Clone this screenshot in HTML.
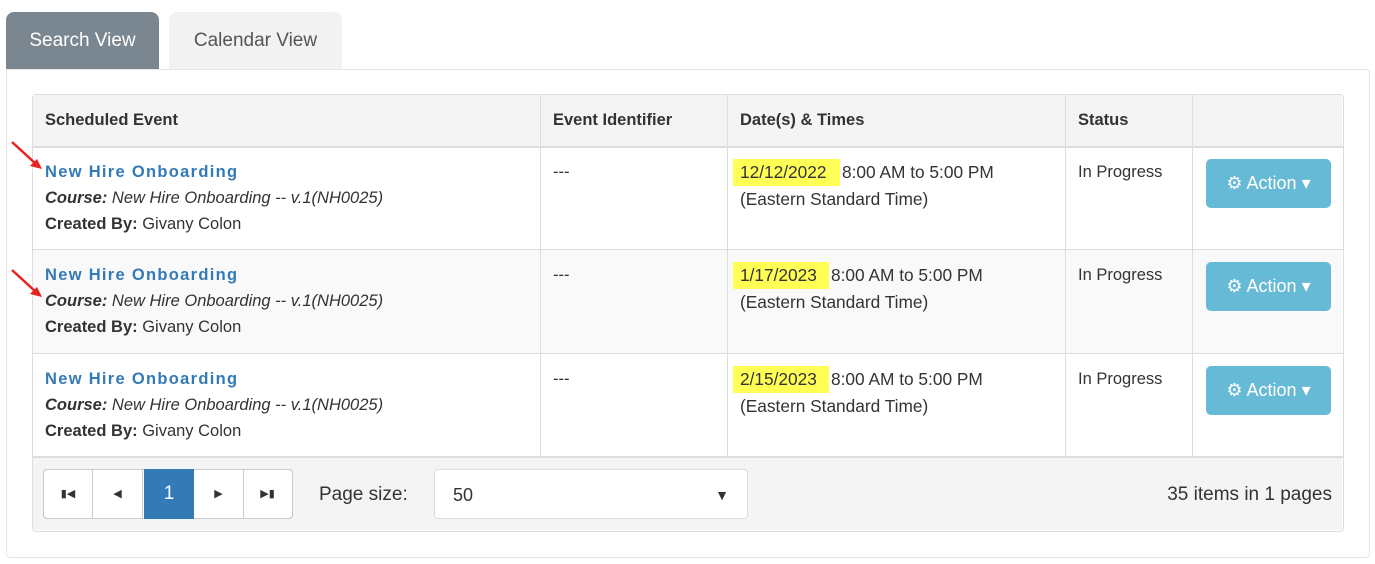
<html><head><style>
body{margin:0;width:1375px;height:564px;background:#fff;font-family:"Liberation Sans",sans-serif;color:#333;position:relative;overflow:hidden}
.a{position:absolute}
.tab{position:absolute;top:12px;height:57px;border-radius:8px 8px 0 0;font-size:19px;line-height:58px;text-align:center}
.t{font-size:18.5px;font-weight:bold;color:#337ab7;letter-spacing:1.3px}
.l{font-size:16.5px;line-height:26px}
.d{font-size:17.3px;line-height:26px}
.hl{background:#ffff55}
.btn{position:absolute;left:1206px;width:125px;height:49px;background:#67bad6;border-radius:5px;color:#fff;font-size:18px;line-height:49px;text-align:center}
.v{position:absolute;top:94px;width:1px;height:363px;background:#ddd}
.h{position:absolute;left:32px;width:1311px;height:1px;background:#ddd}
.pg{position:absolute;top:469px;width:50px;height:50px;box-sizing:border-box;border:1px solid #ccc;text-align:center;line-height:48px;font-size:11px}
</style></head><body>
<div class="tab" style="left:6px;width:153px;background:#7b8790;color:#fff">Search View</div>
<div class="tab" style="left:169px;width:173px;background:#f2f2f2;color:#555">Calendar View</div>
<div class="a" style="left:6px;top:69px;width:1362px;height:487px;border:1px solid #e5e5e5;border-radius:0 4px 4px 4px"></div>
<div class="a" style="left:32px;top:94px;width:1310px;height:436px;border:1px solid #ddd;border-radius:4px;background:#fff"></div>
<div class="a" style="left:33px;top:95px;width:1309px;height:51px;background:#f4f4f4"></div>
<div class="a" style="left:33px;top:250px;width:1309px;height:103px;background:#f9f9f9"></div>
<div class="a" style="left:33px;top:458px;width:1309px;height:72px;background:#f4f4f4"></div>
<div class="h" style="top:146px;height:2px"></div><div class="h" style="top:249px"></div><div class="h" style="top:353px"></div><div class="h" style="top:456px;height:2px"></div>
<div class="v" style="left:540px"></div><div class="v" style="left:727px"></div><div class="v" style="left:1065px"></div><div class="v" style="left:1192px"></div>
<div class="a l" style="top:107px;left:45px;font-weight:bold">Scheduled Event</div>
<div class="a l" style="top:107px;left:553px;font-weight:bold">Event Identifier</div>
<div class="a l" style="top:107px;left:740px;font-weight:bold">Date(s) &amp; Times</div>
<div class="a l" style="top:107px;left:1078px;font-weight:bold">Status</div>

<div class="a" style="left:45px;top:159px"><div class="t l">New Hire Onboarding</div><div class="l"><i><b>Course:</b> New Hire Onboarding -- v.1(NH0025)</i></div><div class="l"><b>Created By:</b> Givany Colon</div></div>
<div class="a" style="left:45px;top:262px"><div class="t l">New Hire Onboarding</div><div class="l"><i><b>Course:</b> New Hire Onboarding -- v.1(NH0025)</i></div><div class="l"><b>Created By:</b> Givany Colon</div></div>
<div class="a" style="left:45px;top:366px"><div class="t l">New Hire Onboarding</div><div class="l"><i><b>Course:</b> New Hire Onboarding -- v.1(NH0025)</i></div><div class="l"><b>Created By:</b> Givany Colon</div></div>

<div class="a l" style="left:553px;top:159px">---</div><div class="a l" style="left:553px;top:262px">---</div><div class="a l" style="left:553px;top:366px">---</div>

<div class="a d" style="left:733px;top:159px"><span class="hl" style="display:inline-block;width:107px;padding-left:7px;box-sizing:border-box;line-height:27px;margin-right:2px">12/12/2022</span>8:00 AM to 5:00 PM<br><span style="padding-left:7px">(Eastern Standard Time)</span></div>
<div class="a d" style="left:733px;top:262px"><span class="hl" style="display:inline-block;width:96px;padding-left:7px;box-sizing:border-box;line-height:27px;margin-right:2px">1/17/2023</span>8:00 AM to 5:00 PM<br><span style="padding-left:7px">(Eastern Standard Time)</span></div>
<div class="a d" style="left:733px;top:366px"><span class="hl" style="display:inline-block;width:96px;padding-left:7px;box-sizing:border-box;line-height:27px;margin-right:2px">2/15/2023</span>8:00 AM to 5:00 PM<br><span style="padding-left:7px">(Eastern Standard Time)</span></div>

<div class="a l" style="left:1078px;top:159px">In Progress</div><div class="a l" style="left:1078px;top:262px">In Progress</div><div class="a l" style="left:1078px;top:366px">In Progress</div>

<div class="btn" style="top:159px">⚙ Action ▾</div>
<div class="btn" style="top:262px">⚙ Action ▾</div>
<div class="btn" style="top:366px">⚙ Action ▾</div>

<svg class="a" style="left:8px;top:138px" width="36" height="34"><line x1="4" y1="4" x2="28" y2="26" stroke="#e8231f" stroke-width="2.5"/><polygon points="34,31 22,28 29,21" fill="#e8231f"/></svg>
<svg class="a" style="left:8px;top:266px" width="36" height="34"><line x1="4" y1="4" x2="28" y2="26" stroke="#e8231f" stroke-width="2.5"/><polygon points="34,31 22,28 29,21" fill="#e8231f"/></svg>

<div class="a" style="left:43px;top:469px;width:250px;height:50px;border:1px solid #ccc;border-radius:4px;box-sizing:border-box;background:#fff"></div>
<div class="pg" style="left:43px;border-radius:4px 0 0 4px">▮◀</div>
<div class="pg" style="left:93px;border-left:none">◀</div>
<div class="pg" style="left:144px;background:#337ab7;border-color:#337ab7;color:#fff;font-size:19px">1</div>
<div class="pg" style="left:194px;border-left:none">▶</div>
<div class="pg" style="left:243px;border-left:none;border-radius:0 4px 4px 0">▶▮</div>
<div class="a" style="left:319px;top:484px;font-size:19px">Page size:</div>
<div class="a" style="left:434px;top:469px;width:314px;height:50px;border:1px solid #ddd;border-radius:4px;box-sizing:border-box;background:#fff;font-size:18px;line-height:50px;padding-left:18px">50<span style="position:absolute;right:18px;font-size:14px">▼</span></div>
<div class="a" style="right:43px;top:484px;font-size:19px">35 items in 1 pages</div>
</body></html>
